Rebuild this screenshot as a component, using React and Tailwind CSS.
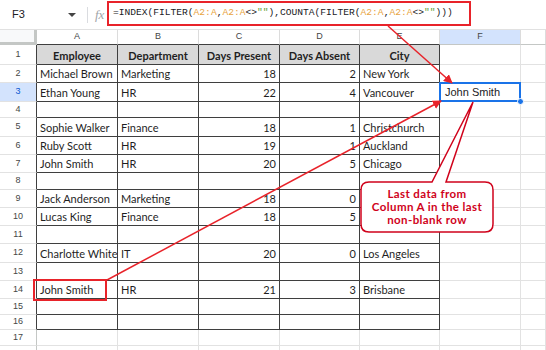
import React from 'react';

const RED = '#e8232a';

const rows = [
  { n: 1, h: 'h-[20px]', cells: ['Employee', 'Department', 'Days Present', 'Days Absent', 'City'], head: true },
  { n: 2, h: 'h-[18px]', cells: ['Michael Brown', 'Marketing', '18', '2', 'New York'] },
  { n: 3, h: 'h-[19px]', cells: ['Ethan Young', 'HR', '22', '4', 'Vancouver'] },
  { n: 4, h: 'h-[16px]', cells: [] },
  { n: 5, h: 'h-[19px]', cells: ['Sophie Walker', 'Finance', '18', '1', 'Christchurch'] },
  { n: 6, h: 'h-[18px]', cells: ['Ruby Scott', 'HR', '19', '1', 'Auckland'] },
  { n: 7, h: 'h-[18px]', cells: ['John Smith', 'HR', '20', '5', 'Chicago'] },
  { n: 8, h: 'h-[17px]', cells: [] },
  { n: 9, h: 'h-[18px]', cells: ['Jack Anderson', 'Marketing', '18', '0', ''] },
  { n: 10, h: 'h-[18px]', cells: ['Lucas King', 'Finance', '18', '5', ''] },
  { n: 11, h: 'h-[18px]', cells: [] },
  { n: 12, h: 'h-[19px]', cells: ['Charlotte White', 'IT', '20', '0', 'Los Angeles'] },
  { n: 13, h: 'h-[18px]', cells: [] },
  { n: 14, h: 'h-[18px]', cells: ['John Smith', 'HR', '21', '3', 'Brisbane'] },
  { n: 15, h: 'h-[16px]', cells: [] },
  { n: 16, h: 'h-[15px]', cells: [] },
  { n: 17, h: 'h-[16px]', cells: [], outside: true },
  { n: 18, h: 'h-[16px]', cells: [], outside: true, hidden: true },
];

const letters = ['A', 'B', 'C', 'D', 'E', 'F', ''];

// formula pieces: [text, colour]
const formula = [
  ['=INDEX(FILTER(', '#202124'],
  ['A2:A', '#e8a33d'],
  [',', '#202124'],
  ['A2:A', '#e8a33d'],
  ['<>', '#202124'],
  ['""', '#5f9e3a'],
  ['),COUNTA(FILTER(', '#202124'],
  ['A2:A', '#e8a33d'],
  [',', '#202124'],
  ['A2:A', '#e8a33d'],
  ['<>', '#202124'],
  ['""', '#5f9e3a'],
  [')))', '#202124'],
];

function DataCell({ value, col, head, outside }) {
  if (outside || col > 4) {
    return <div className="border-r border-b border-[#e2e2e2]" />;
  }
  const num = !head && (col === 2 || col === 3);
  return (
    <div
      className={`flex items-end pb-[1px] border-r border-b border-[#3f3f3f] px-[3px] overflow-hidden whitespace-nowrap font-['Lato',sans-serif] text-[11px] leading-[15px] text-[#1f1f1f] ${
        head ? 'bg-[#d9d9d9] justify-center font-bold text-[11.5px]' : num ? 'justify-end' : 'justify-start'
      }`}
    >
      {value}
    </div>
  );
}

export default function App() {
  return (
    <div className="relative w-[546px] h-[350px] overflow-hidden bg-white font-['Liberation_Sans',Arial,sans-serif]">
      {/* formula bar */}
      <div className="flex items-center h-[30px] border-b border-[#e1e1e1]">
        <div className="flex items-center justify-between w-[87px] pl-[12px] pr-[11px]">
          <span className="text-[11px] text-[#202124]">F3</span>
          <span className="w-0 h-0 border-l-[4px] border-r-[4px] border-t-[4px] border-l-transparent border-r-transparent border-t-[#444]" />
        </div>
        <div className="w-px h-[16px] bg-[#dadce0]" />
        <span className="ml-[7px] w-[12px] text-[13px] italic text-[#a0a4a8] font-['Liberation_Serif',serif]">fx</span>
        <div className="self-start mt-[1px] w-[364px] h-[25px] border-2 border-[#e8232a] flex items-center pl-[4px] font-['Liberation_Mono',monospace] text-[9.6px] whitespace-nowrap">
          {formula.map(([t, c], i) => (
            <span key={i} style={{ color: c }}>
              {t}
            </span>
          ))}
        </div>
      </div>

      {/* grid */}
      <div className="grid grid-cols-[37px_81px_81px_81px_80px_80px_81px_1fr]">
        <div className="h-[15px] bg-[#f8f9fa] border-r-[3px] border-b-[3px] border-[#c4c7c5]" />
        {letters.map((l, i) => (
          <div
            key={i}
            className={`h-[15px] flex items-center justify-center text-[9px] text-[#444746] border-r border-[#dcdcdc] ${
              i < 5 ? 'border-b border-b-[#3f3f3f]' : 'border-b border-b-[#c4c7c5]'
            } ${l === 'F' ? 'bg-[#d3e3fd] text-[#0b57d0]' : 'bg-white'}`}
          >
            {l}
          </div>
        ))}

        {rows.map((r) => (
          <React.Fragment key={r.n}>
            <div
              className={`${r.h} flex items-center justify-center text-[9px] border-b border-[#e2e2e2] border-r ${
                r.outside ? 'border-r-[#c4c7c5]' : 'border-r-[#3f3f3f]'
              } ${r.n === 3 ? 'bg-[#d3e3fd] text-[#0b57d0]' : 'text-[#444746]'}`}
            >
              {r.hidden ? '' : r.n}
            </div>
            {[0, 1, 2, 3, 4].map((c) => (
              <DataCell key={c} col={c} value={r.cells[c] || ''} head={r.head} outside={r.outside} />
            ))}
            {r.n === 3 ? (
              <div className="relative border-r border-b border-[#e2e2e2] flex items-end pb-[2px] pl-[5px] text-[11px] leading-[14px] text-[#202124]">
                John Smith
                <div className="absolute -left-px -top-px w-[82px] h-[20px] border-2 border-[#1a73e8]" />
                <div className="absolute -right-[4px] -bottom-[4px] w-[7px] h-[7px] rounded-full bg-[#1a73e8] border border-white" />
              </div>
            ) : (
              <DataCell col={5} />
            )}
            <DataCell col={6} />
          </React.Fragment>
        ))}
      </div>

      {/* annotations */}
      <div className="absolute left-[33px] top-[279px] w-[74px] h-[22px] border-2 border-[#e8232a]" />
      <svg className="absolute inset-0 pointer-events-none" width="546" height="350">
        <defs>
          <marker id="ah" viewBox="0 0 10 10" refX="9" refY="5" markerWidth="9" markerHeight="9" orient="auto" markerUnits="userSpaceOnUse">
            <path d="M0,0 L10,5 L0,10 z" fill={RED} />
          </marker>
        </defs>
        <line x1="388" y1="26" x2="452" y2="83" stroke={RED} strokeWidth="1.5" markerEnd="url(#ah)" />
        <line x1="107" y1="280" x2="441" y2="101" stroke={RED} strokeWidth="1.5" markerEnd="url(#ah)" />
        <path
          d="M369 182 L432 182 L473 102 L446 182 L485 182 Q493 182 493 190 L493 224 Q493 232 485 232 L369 232 Q361 232 361 224 L361 190 Q361 182 369 182 Z"
          fill="white"
          stroke="#d0021b"
          strokeWidth="1.5"
        />
      </svg>
      <div className="absolute left-[361px] top-[187px] w-[132px] flex flex-col items-center font-['Lato',sans-serif] font-bold text-[11.5px] leading-[13px] tracking-[0.4px] text-[#d0021b]">
        <span>Last data from</span>
        <span>Column A in the last</span>
        <span>non-blank row</span>
      </div>
    </div>
  );
}
